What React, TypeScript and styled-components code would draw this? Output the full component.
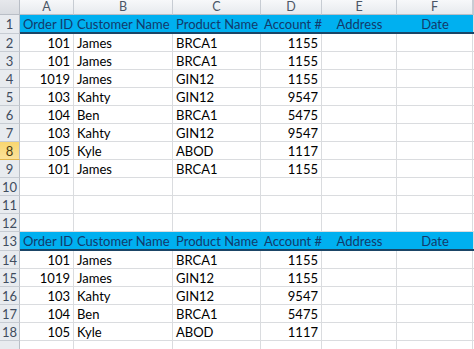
import React from "react";
import styled, { createGlobalStyle, css } from "styled-components";

const Global = createGlobalStyle`
  html, body { margin: 0; padding: 0; background: #ffffff; overflow: hidden; }
  body { font-family: Lato, "Liberation Sans", sans-serif; }
`;

const COLS = "20px 54px 99px 88px 61px 75px 76px 1fr";

const Sheet = styled.div`
  display: grid;
  grid-template-columns: ${COLS};
  width: 474px;
  height: 349px;
  overflow: hidden;
  font-size: 13px;
  color: #000;
`;

const Corner = styled.div`
  height: 14px;
  background: linear-gradient(#e6e8ec, #d9dce1);
  border-right: 1px solid #b9bec6;
  border-bottom: 1px solid #b9bec6;
`;

const ColHead = styled.div`
  height: 14px;
  line-height: 14px;
  text-align: center;
  font-size: 12.5px;
  color: #4a5566;
  background: linear-gradient(#f7f8fa, #e7eaee);
  border-right: 1px solid #c7ccd3;
  border-bottom: 1px solid #b9bec6;
`;

const RowHead = styled.div<{ $h: number; $active?: boolean }>`
  height: ${(p) => p.$h - 1}px;
  line-height: ${(p) => p.$h}px;
  text-align: center;
  font-size: 13px;
  color: #3f4c5e;
  background: #e8ebef;
  border-right: 1px solid #b9bec6;
  border-bottom: 1px solid #c7ccd3;
  ${(p) =>
    p.$active &&
    css`
      background: linear-gradient(#f9d66f, #fbe29a);
      color: #4a3a10;
      border-bottom-color: #e1b54a;
    `}
`;

const Cell = styled.div<{ $align?: "left" | "right" | "center" }>`
  height: 17px;
  line-height: 18px;
  padding: 0 3px;
  white-space: nowrap;
  min-width: 0;
  text-align: ${(p) => p.$align || "left"};
  border-right: 1px solid #dadcdf;
  border-bottom: 1px solid #dadcdf;
`;

const HeadCell = styled.div<{ $align?: "left" | "right" | "center" }>`
  height: 17px;
  line-height: 18px;
  padding: 0 3px;
  white-space: nowrap;
  min-width: 0;
  text-align: ${(p) => p.$align || "left"};
  background: #00b0f0;
  color: #123a6b;
  border-bottom: 2px solid #1b4566;
`;

const Tail = styled.div<{ $blue?: boolean }>`
  height: 17px;
  border-bottom: ${(p) => (p.$blue ? "2px solid #1b4566" : "1px solid #dadcdf")};
  background: ${(p) => (p.$blue ? "#d9dcdf" : "#fff")};
`;

type Row = [string, string, string, string];

const table1: Row[] = [
  ["101", "James", "BRCA1", "1155"],
  ["101", "James", "BRCA1", "1155"],
  ["1019", "James", "GIN12", "1155"],
  ["103", "Kahty", "GIN12", "9547"],
  ["104", "Ben", "BRCA1", "5475"],
  ["103", "Kahty", "GIN12", "9547"],
  ["105", "Kyle", "ABOD", "1117"],
  ["101", "James", "BRCA1", "1155"],
];

const table2: Row[] = [
  ["101", "James", "BRCA1", "1155"],
  ["1019", "James", "GIN12", "1155"],
  ["103", "Kahty", "GIN12", "9547"],
  ["104", "Ben", "BRCA1", "5475"],
  ["105", "Kyle", "ABOD", "1117"],
];

const HeaderRow: React.FC<{ n: number }> = ({ n }) => (
  <>
    <RowHead $h={19}>{n}</RowHead>
    <HeadCell>Order ID</HeadCell>
    <HeadCell>Customer Name</HeadCell>
    <HeadCell>Product Name</HeadCell>
    <HeadCell>Account #</HeadCell>
    <HeadCell $align="center">Address</HeadCell>
    <HeadCell $align="center">Date</HeadCell>
    <Tail $blue />
  </>
);

const DataRow: React.FC<{ n?: number; r?: Row }> = ({ n, r }) => (
  <>
    <RowHead $h={18} $active={n === 8}>
      {n ?? ""}
    </RowHead>
    <Cell $align="right">{r ? r[0] : ""}</Cell>
    <Cell>{r ? r[1] : ""}</Cell>
    <Cell>{r ? r[2] : ""}</Cell>
    <Cell $align="right">{r ? r[3] : ""}</Cell>
    <Cell />
    <Cell />
    <Tail />
  </>
);

export default function App() {
  return (
    <>
      <Global />
      <Sheet>
        <Corner />
        {["A", "B", "C", "D", "E", "F"].map((c) => (
          <ColHead key={c}>{c}</ColHead>
        ))}
        <ColHead />
        <HeaderRow n={1} />
        {table1.map((r, i) => (
          <DataRow key={i} n={i + 2} r={r} />
        ))}
        <DataRow n={10} />
        <DataRow n={11} />
        <DataRow n={12} />
        <HeaderRow n={13} />
        {table2.map((r, i) => (
          <DataRow key={i} n={i + 14} r={r} />
        ))}
        <DataRow />
      </Sheet>
    </>
  );
}
